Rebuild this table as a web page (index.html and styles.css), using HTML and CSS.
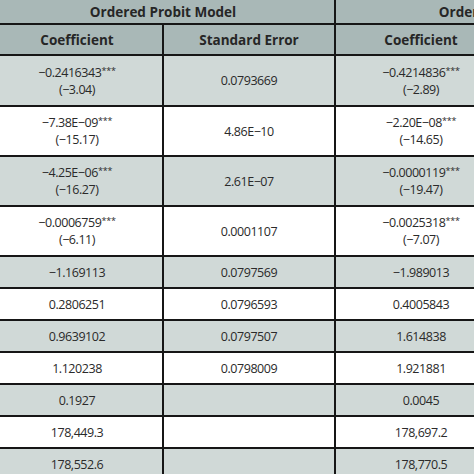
FILE: index.html
```html
<!DOCTYPE html>
<html>
<head>
<meta charset="utf-8">
<link rel="stylesheet" href="styles.css">
</head>
<body>
<div class="frame">
<table class="results">
  <colgroup><col class="c"><col class="c"><col class="c"><col class="c"></colgroup>
  <thead>
    <tr class="h1">
      <th colspan="2" class="rb">Ordered Probit Model</th>
      <th colspan="2">Ordered Logit Model</th>
    </tr>
    <tr class="h2">
      <th class="rb">Coefficient</th>
      <th class="rb">Standard Error</th>
      <th class="rb">Coefficient</th>
      <th>Standard Error</th>
    </tr>
  </thead>
  <tbody>
    <tr class="dbl first g"><td class="rb">−0.2416343<sup>***</sup><br>(−3.04)</td><td class="rb">0.0793669</td><td class="rb">−0.4214836<sup>***</sup><br>(−2.89)</td><td>0.1458</td></tr>
    <tr class="dbl"><td class="rb">−7.38E−09<sup>***</sup><br>(−15.17)</td><td class="rb">4.86E−10</td><td class="rb">−2.20E−08<sup>***</sup><br>(−14.65)</td><td>1.50E−09</td></tr>
    <tr class="dbl g"><td class="rb">−4.25E−06<sup>***</sup><br>(−16.27)</td><td class="rb">2.61E−07</td><td class="rb">−0.0000119<sup>***</sup><br>(−19.47)</td><td>6.11E−07</td></tr>
    <tr class="dbl"><td class="rb">−0.0006759<sup>***</sup><br>(−6.11)</td><td class="rb">0.0001107</td><td class="rb">−0.0025318<sup>***</sup><br>(−7.07)</td><td>0.000358</td></tr>
    <tr class="sgl g"><td class="rb">−1.169113</td><td class="rb">0.0797569</td><td class="rb">−1.989013</td><td>0.1371</td></tr>
    <tr class="sgl"><td class="rb">0.2806251</td><td class="rb">0.0796593</td><td class="rb">0.4005843</td><td>0.1368</td></tr>
    <tr class="sgl g"><td class="rb">0.9639102</td><td class="rb">0.0797507</td><td class="rb">1.614838</td><td>0.1370</td></tr>
    <tr class="sgl"><td class="rb">1.120238</td><td class="rb">0.0798009</td><td class="rb">1.921881</td><td>0.1371</td></tr>
    <tr class="sgl g"><td class="rb">0.1927</td><td class="rb"></td><td class="rb">0.0045</td><td></td></tr>
    <tr class="sgl"><td class="rb">178,449.3</td><td class="rb"></td><td class="rb">178,697.2</td><td></td></tr>
    <tr class="sgl g"><td class="rb">178,552.6</td><td class="rb"></td><td class="rb">178,770.5</td><td></td></tr>
  </tbody>
</table>
</div>
</body>
</html>
```
FILE: styles.css
```css
html, body {
  margin: 0;
  padding: 0;
  background: #ffffff;
}
.frame {
  width: 474px;
  height: 474px;
  overflow: hidden;
}
.results {
  margin-left: -8px;
  border-collapse: separate;
  border-spacing: 0;
  table-layout: fixed;
  width: 688px;
  font-family: "Open Sans", "Liberation Sans", sans-serif;
  color: #2a2a2a;
}
.c { width: 172px; }
th, td {
  box-sizing: border-box;
  padding: 0;
  text-align: center;
  vertical-align: middle;
  border-bottom: 2px solid #161616;
}
.rb { border-right: 2px solid #161616; }
th {
  background: #a9b8b7;
  font-size: 13.5px;
  font-weight: 700;
  color: #262626;
}
.h1 th { height: 25px; }
.h2 th { height: 31px; }
td {
  font-size: 12.5px;
  line-height: 17px;
  letter-spacing: -0.45px;
}
sup {
  font-size: 9px;
  line-height: 0;
  vertical-align: 3px;
  letter-spacing: -0.2px;
}
.g td { background: #d0d9d7; }
.dbl td { height: 50px; }
.dbl.first td { height: 51px; }
.sgl td { height: 32px; }
```
